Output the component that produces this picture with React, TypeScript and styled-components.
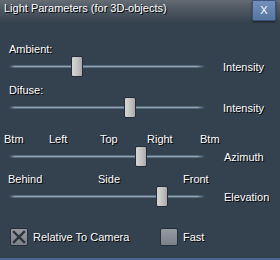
import React from "react";
import styled, { createGlobalStyle } from "styled-components";

const Global = createGlobalStyle`
  html, body { margin: 0; padding: 0; background: #34414f; }
  body { font-family: "Liberation Sans", Arial, sans-serif; }
`;

const Panel = styled.div`
  width: 280px;
  height: 260px;
  box-sizing: border-box;
  background: #34414f;
  border-bottom: 2px solid #4b6890;
  display: flex;
  flex-direction: column;
  color: #fff;
  font-size: 11px;
  line-height: 13px;
  text-shadow: 1px 1px 0 #000;
`;

const TitleBar = styled.div`
  height: 22px;
  box-sizing: border-box;
  padding: 2px 4px 0 4px;
  display: flex;
  justify-content: space-between;
  align-items: flex-start;
  background: linear-gradient(#656c73 0%, #4f5963 40%, #37434f 100%);
`;

const Title = styled.span`
  font-size: 11px;
`;

const CloseButton = styled.button`
  width: 24px;
  height: 21px;
  margin-top: -2px;
  padding: 0;
  border: 1px solid #3c5580;
  border-radius: 0 0 2px 2px;
  background: linear-gradient(#7290bb, #5675a1);
  color: #fff;
  font-family: "Liberation Sans", Arial, sans-serif;
  font-size: 11px;
  line-height: 19px;
  text-shadow: none;
  box-shadow: 0 1px 2px rgba(0, 0, 0, 0.6);
  cursor: pointer;
`;

const Content = styled.div`
  display: flex;
  flex-direction: column;
  padding-top: 21px;
`;

const Label = styled.div<{ $mt?: number }>`
  padding-left: 9px;
  height: 13px;
  margin-top: ${(p) => p.$mt ?? 0}px;
`;

const Scale = styled.div<{ $cols: string; $pl: number; $mt: number }>`
  display: grid;
  grid-template-columns: ${(p) => p.$cols};
  padding-left: ${(p) => p.$pl}px;
  height: 13px;
  margin-top: ${(p) => p.$mt}px;
`;

const SliderRow = styled.div<{ $mt?: number }>`
  display: grid;
  grid-template-columns: 196px 1fr;
  column-gap: 18px;
  align-items: center;
  padding-left: 9px;
  margin-top: ${(p) => p.$mt ?? 0}px;
`;

const SliderTrack = styled.div`
  position: relative;
  height: 21px;
  &::before {
    content: "";
    position: absolute;
    left: 0;
    right: 0;
    top: 9px;
    height: 3px;
    background:
      linear-gradient(90deg, #34414f 0%, transparent 3%, transparent 96%, #34414f 100%),
      linear-gradient(#3f5264, #8ea2b4 50%, #3f5264);
  }
`;

const Thumb = styled.div`
  position: absolute;
  top: 0;
  width: 12px;
  height: 21px;
  box-sizing: border-box;
  border: 1px solid #252c3a;
  border-radius: 2px;
  background: linear-gradient(90deg, #d6d6d6, #c4c4c4 50%, #a9a9a9);
`;

const SideLabel = styled.span<{ $dx?: number }>`
  margin-left: ${(p) => p.$dx ?? 0}px;
  margin-top: 2px;
`;

const CheckRow = styled.div`
  display: flex;
  align-items: center;
  padding-left: 10px;
  margin-top: 21px;
`;

const CheckItem = styled.label<{ $w?: number }>`
  display: flex;
  align-items: center;
  gap: 5px;
  width: ${(p) => (p.$w ? `${p.$w}px` : "auto")};
`;

const Box = styled.span`
  width: 18px;
  height: 18px;
  box-sizing: border-box;
  border: 1px solid #262e3b;
  border-radius: 2px;
  background: linear-gradient(#959aa1, #7b8189);
  display: flex;
  align-items: center;
  justify-content: center;
`;

function Slider({ value }: { value: number }) {
  return (
    <SliderTrack>
      <Thumb style={{ left: `${Math.round(value * 184)}px` }} />
    </SliderTrack>
  );
}

export default function App() {
  return (
    <>
      <Global />
      <Panel>
        <TitleBar>
          <Title>Light Parameters (for 3D-objects)</Title>
          <CloseButton>X</CloseButton>
        </TitleBar>
        <Content>
          <Label>Ambient:</Label>
          <SliderRow>
            <Slider value={62 / 184} />
            <SideLabel>Intensity</SideLabel>
          </SliderRow>
          <Label $mt={7}>Difuse:</Label>
          <SliderRow>
            <Slider value={115 / 184} />
            <SideLabel>Intensity</SideLabel>
          </SliderRow>
          <Scale $cols="45px 51px 47px 53px auto" $pl={4} $mt={15}>
            <span>Btm</span>
            <span>Left</span>
            <span>Top</span>
            <span>Right</span>
            <span>Btm</span>
          </Scale>
          <SliderRow>
            <Slider value={126 / 184} />
            <SideLabel $dx={1}>Azimuth</SideLabel>
          </SliderRow>
          <Scale $cols="90px 85px auto" $pl={8} $mt={6}>
            <span>Behind</span>
            <span>Side</span>
            <span>Front</span>
          </Scale>
          <SliderRow>
            <Slider value={147 / 184} />
            <SideLabel $dx={1}>Elevation</SideLabel>
          </SliderRow>
          <CheckRow>
            <CheckItem $w={150}>
              <Box>
                <svg width="14" height="14" viewBox="0 0 14 14">
                  <path d="M2 2 L12 12 M12 2 L2 12" stroke="#2b323b" strokeWidth="2.4" strokeLinecap="square" />
                </svg>
              </Box>
              <span>Relative To Camera</span>
            </CheckItem>
            <CheckItem>
              <Box />
              <span>Fast</span>
            </CheckItem>
          </CheckRow>
        </Content>
      </Panel>
    </>
  );
}
